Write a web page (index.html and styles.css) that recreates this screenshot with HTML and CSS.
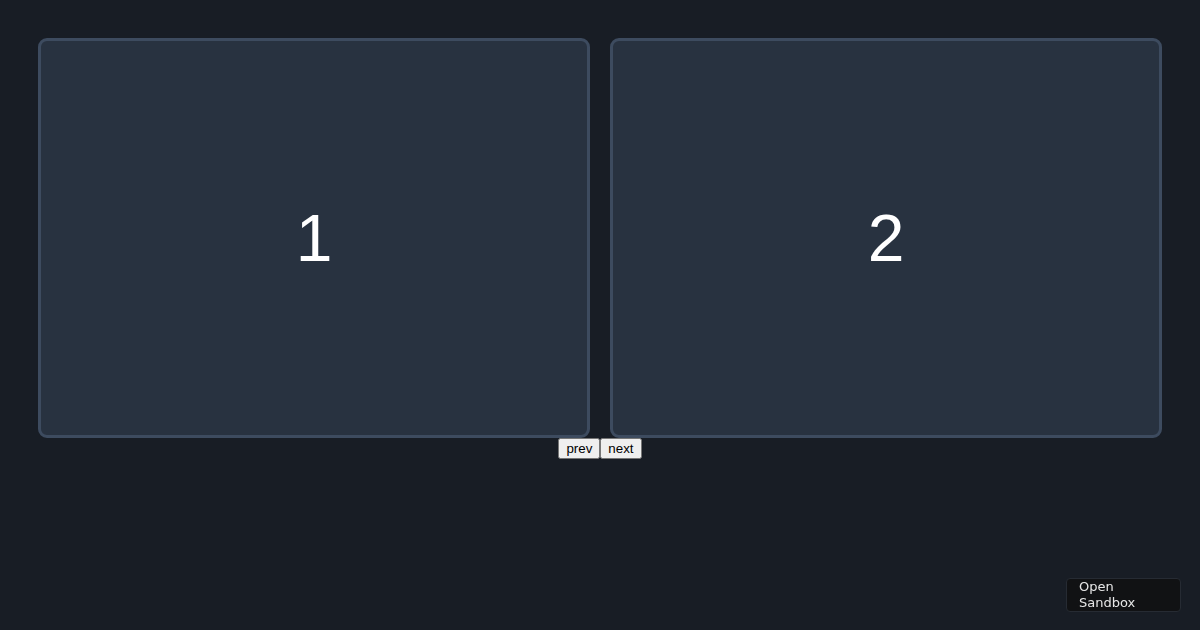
FILE: index.html
```html
<!DOCTYPE html>
<html lang="en">
<head>
<meta charset="utf-8">
<title>Carousel</title>
<link rel="stylesheet" href="styles.css">
</head>
<body>
<div class="page">
  <div class="track">
    <div class="slide"><span class="num">1</span></div>
    <div class="slide"><span class="num">2</span></div>
  </div>
  <div class="controls"><button class="btn" type="button">prev</button><button class="btn" type="button">next</button></div>
</div>
<a class="sandbox" href="#">Open Sandbox</a>
</body>
</html>
```
FILE: styles.css
```css
html, body {
  margin: 0;
  padding: 0;
  background: #181d25;
  height: 100%;
}
.page {
  padding: 38px 38px 0;
}
.track {
  display: flex;
  gap: 20px;
}
.slide {
  flex: 1 1 0;
  height: 400px;
  box-sizing: border-box;
  background: #283240;
  border: 3px solid #3d4b5f;
  border-radius: 9px;
  display: flex;
  align-items: center;
  justify-content: center;
}
.num {
  font-family: "Liberation Sans", Arial, sans-serif;
  font-size: 66px;
  color: #ffffff;
  line-height: 1;
}
.controls {
  display: flex;
  justify-content: center;
}
.btn {
  font-family: "Liberation Sans", Arial, sans-serif;
  font-size: 13.333px;
}
.sandbox {
  position: fixed;
  right: 19px;
  bottom: 18px;
  width: 115px;
  box-sizing: border-box;
  padding: 0 20px 0 12px;
  background: #111214;
  border: 1px solid #262b33;
  border-radius: 4px;
  color: #e6e6e6;
  font-family: "DejaVu Sans", sans-serif;
  font-size: 13px;
  line-height: 16px;
  text-decoration: none;
}
```
